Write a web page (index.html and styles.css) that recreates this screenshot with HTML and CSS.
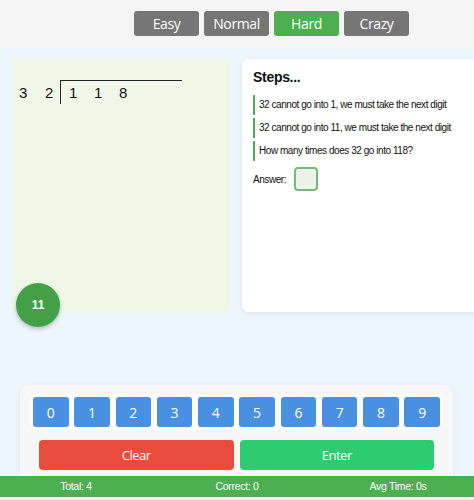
FILE: index.html
```html
<!DOCTYPE html>
<html lang="en">
<head>
    <meta charset="UTF-8">
    <meta name="viewport" content="width=device-width, initial-scale=1.0">
    <title>Long Division</title>
    <link rel="stylesheet" href="styles.css">
</head>
<body>
    <div id="page">
        <div id="levelBar">
            <button class="levelButton">Easy</button>
            <button class="levelButton">Normal</button>
            <button class="levelButton active">Hard</button>
            <button class="levelButton">Crazy</button>
        </div>

        <div id="workArea">
            <div id="boardDiv">
                <div class="division">
                    <div class="divisor"><span>3</span><span>2</span></div>
                    <div class="dividend"><span>1</span><span>1</span><span>8</span></div>
                </div>
                <div class="bubble">11</div>
            </div>

            <div id="stepsDiv">
                <h2 class="stepsTitle">Steps...</h2>
                <div class="step">32 cannot go into 1, we must take the next digit</div>
                <div class="step">32 cannot go into 11, we must take the next digit</div>
                <div class="step">How many times does 32 go into 118?</div>
                <div class="answerRow">
                    <label for="answerInput">Answer:</label>
                    <input type="text" id="answerInput" class="answerBox"/>
                </div>
            </div>
        </div>

        <div id="padDiv">
            <div class="digitRow">
                <button class="digit">0</button>
                <button class="digit">1</button>
                <button class="digit">2</button>
                <button class="digit">3</button>
                <button class="digit">4</button>
                <button class="digit">5</button>
                <button class="digit">6</button>
                <button class="digit">7</button>
                <button class="digit">8</button>
                <button class="digit">9</button>
            </div>
            <div class="actionRow">
                <button class="action clear">Clear</button>
                <button class="action enter">Enter</button>
            </div>
        </div>
    </div>

    <div id="statsBar">
        <span>Total: 4</span>
        <span>Correct: 0</span>
        <span>Avg Time: 0s</span>
    </div>
</body>
</html>
```
FILE: styles.css
```css
html, body {
    margin: 0;
    overflow: hidden;
}
body {
    background-color: #eef6fd;
    font-family: "Liberation Sans", Arial, sans-serif;
    color: #111;
}
button {
    border: none;
    cursor: pointer;
}
#page {
    width: 543px;
}
#levelBar {
    display: flex;
    justify-content: center;
    gap: 5px;

    background-color: #f5f5f5;

    height: 48px;
    padding-top: 11px;
    box-sizing: border-box;
}
.levelButton {
    width: 65px;
    height: 25px;

    background-color: #767676;
    color: #fff;

    border-radius: 3px;

    font-family: "Open Sans", sans-serif;
    font-size: 14px;
    letter-spacing: -0.4px;
}
.levelButton.active {
    background-color: #4caf50;
}
#workArea {
    display: grid;
    grid-template-columns: 218px 289px;
    gap: 12px;

    padding: 11px 12px 73px 12px;
}
#boardDiv {
    position: relative;

    height: 252px;

    background-color: #f1f7e7;
}
.division {
    display: flex;
    align-items: baseline;

    padding: 21px 0 0 7px;

    font-size: 15px;
    line-height: 18px;
}
.divisor span + span {
    margin-left: 17.6px;
}
.divisor {
    padding-right: 6.6px;
}
.dividend {
    width: 113px;
    height: 20px;

    border-top: 1px solid #222;
    border-left: 1px solid #222;

    padding: 3px 0 0 8px;
}
.dividend span {
    display: inline-block;
    width: 25px;
}
.bubble {
    position: absolute;
    left: 4px;
    bottom: -16px;

    width: 44px;
    height: 44px;
    border-radius: 50%;

    background-color: #43a047;
    color: #fff;
    box-shadow: 0 2px 4px rgba(0, 0, 0, 0.25);

    display: flex;
    align-items: center;
    justify-content: center;

    font-size: 12px;
    font-weight: bold;
}
#stepsDiv {
    height: 253px;

    background-color: #fff;
    border-radius: 6px;
    box-shadow: 0 1px 4px rgba(0, 0, 0, 0.08);

    padding: 10px 11px;
    box-sizing: border-box;
}
.stepsTitle {
    margin: 0 0 10px 0;

    font-size: 14px;
    line-height: 16px;
    letter-spacing: -0.3px;
}
.step {
    border-left: 2px solid #4caf50;

    padding: 4px 0 4px 4px;
    margin-bottom: 3px;

    font-size: 10px;
    line-height: 12px;
    letter-spacing: -0.45px;
}
.answerRow {
    display: flex;
    align-items: center;
    gap: 8px;

    margin-top: 6px;

    font-size: 10px;
    letter-spacing: -0.45px;
}
.answerBox {
    width: 24px;
    height: 24px;
    box-sizing: border-box;

    border: 2px solid #72bd74;
    border-radius: 4px;

    background-color: #ebf3ea;
}
#padDiv {
    width: 433px;
    margin-left: 20px;

    background-color: #f7f7f7;
    border-radius: 8px;
    box-shadow: 0 1px 6px rgba(0, 0, 0, 0.06);

    padding: 9px 10px 20px 10px;
    box-sizing: border-box;
}
.digitRow {
    display: flex;
    gap: 5.7px;

    background-color: #fdfdfd;
    border-radius: 6px;

    padding: 3px;
}
.digit {
    flex: 1;
    height: 30px;

    background-color: #4a90e2;
    color: #fff;

    border-radius: 3px;

    font-family: "Open Sans", sans-serif;
    font-size: 14px;
}
.actionRow {
    display: flex;
    gap: 6px;

    margin-top: 10px;
    padding: 0 9px;
}
.action {
    flex: 1;
    height: 30px;

    color: #fff;
    border-radius: 4px;

    font-family: "Open Sans", sans-serif;
    font-size: 13px;
    letter-spacing: -0.5px;
}
.clear {
    background-color: #e74c3c;
}
.enter {
    background-color: #2ecc71;
}
#statsBar {
    position: fixed;
    left: 0;
    right: 0;
    bottom: 3px;

    display: grid;
    grid-template-columns: repeat(3, 161px);
    justify-content: center;

    height: 21px;
    line-height: 21px;

    background-color: #4caf50;
    color: #fff;

    text-align: center;
    font-size: 10.5px;
    letter-spacing: -0.3px;
}
```
